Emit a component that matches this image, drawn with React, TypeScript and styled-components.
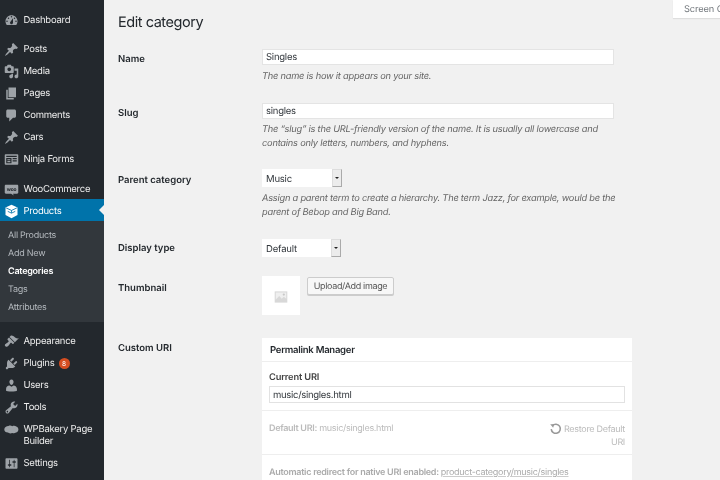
import React from "react";
import styled, { createGlobalStyle } from "styled-components";

const Global = createGlobalStyle`
  html, body { margin: 0; padding: 0; height: 480px; overflow: hidden; background: #f1f1f1; }
  body { font-family: Inter, "Open Sans", "Liberation Sans", sans-serif; font-size: 9px; color: #444; text-rendering: geometricPrecision; }
  #root { height: 480px; }
  * { box-sizing: border-box; }
`;

const Page = styled.div`
  display: flex;
  width: 720px;
  height: 480px;
  overflow: hidden;
  position: relative;
  filter: blur(0.35px);
`;

const Sidebar = styled.nav`
  width: 104px;
  flex: none;
  height: 480px;
  background: #23282d;
  padding-top: 8px;
  display: flex;
  flex-direction: column;
`;

const Group = styled.div<{ $gap?: number }>`
  margin-bottom: ${(p) => p.$gap ?? 7}px;
`;

const Item = styled.div<{ $active?: boolean; $tall?: boolean }>`
  position: relative;
  display: flex;
  align-items: ${(p) => (p.$tall ? "flex-start" : "center")};
  height: ${(p) => (p.$tall ? 34 : 22)}px;
  padding-top: ${(p) => (p.$tall ? 4 : 0)}px;
  padding-left: 4px;
  background: ${(p) => (p.$active ? "#0073aa" : "transparent")};
  color: ${(p) => (p.$active ? "#fff" : "#eee")};
  font-size: 9.5px;
  letter-spacing: -0.25px;
  line-height: 12px;
  ${(p) =>
    p.$active
      ? `&::after {
    content: "";
    position: absolute;
    right: 0;
    top: 6px;
    border: 5px solid transparent;
    border-right-color: #f1f1f1;
    border-left-width: 0;
  }`
      : ""}
`;

const IconSlot = styled.span<{ $active?: boolean }>`
  width: 15px;
  height: 15px;
  flex: none;
  margin: 2px 4.5px 0 0;
  color: ${(p) => (p.$active ? "#fff" : "#9ea3a8")};
  & svg {
    display: block;
    width: 15px;
    height: 15px;
    fill: currentColor;
  }
`;

const Label = styled.span`
  display: block;
  width: 72px;
  padding-top: 3px;
`;

const Badge = styled.span`
  display: inline-flex;
  width: 11px;
  height: 11px;
  margin-left: 4px;
  border-radius: 50%;
  background: #d54e21;
  color: #fff;
  font-size: 6.5px;
  letter-spacing: 0;
  align-items: center;
  justify-content: center;
`;

const PluginLabel = styled.span`
  display: flex;
  align-items: center;
  padding-top: 3px;
`;

const SubMenu = styled.div`
  background: #32373c;
  padding: 5px 0 6px 8px;
  margin-bottom: 7px;
`;

const SubItem = styled.div<{ $current?: boolean }>`
  height: 18px;
  line-height: 19px;
  font-size: 9px;
  letter-spacing: -0.25px;
  color: ${(p) => (p.$current ? "#fff" : "#b4b9be")};
  font-weight: ${(p) => (p.$current ? 600 : 400)};
`;

const Main = styled.main`
  flex: 1;
  min-width: 0;
  padding: 12px 0 0 14px;
`;

const Title = styled.h1`
  margin: 0 0 18px;
  height: 19px;
  font-size: 14.5px;
  letter-spacing: -0.45px;
  line-height: 21px;
  font-weight: 400;
  color: #23282d;
`;

const FormRow = styled.div<{ $height: number }>`
  display: grid;
  grid-template-columns: 144px 1fr;
  height: ${(p) => p.$height}px;
`;

const RowLabel = styled.div<{ $top: number }>`
  padding-top: ${(p) => p.$top}px;
  font-size: 9.5px;
  line-height: 12px;
  font-weight: 600;
  color: #23282d;
`;

const TextInput = styled.div`
  width: 352px;
  height: 16px;
  background: #fff;
  border: 1px solid #e4e4e4;
  padding-left: 3px;
  font-size: 9.5px;
  letter-spacing: -0.25px;
  line-height: 16px;
  color: #32373c;
`;

const Hint = styled.p<{ $top: number }>`
  margin: ${(p) => p.$top}px 0 0;
  font-size: 9.25px;
  letter-spacing: -0.22px;
  line-height: 14px;
  font-style: italic;
  color: #666;
  width: 367px;
`;

const Select = styled.div<{ $width: number }>`
  width: ${(p) => p.$width}px;
  height: 18px;
  background: #fff;
  display: flex;
  align-items: center;
  justify-content: space-between;
  padding-left: 4px;
  font-size: 9.5px;
  letter-spacing: -0.2px;
  color: #32373c;
`;

const SelectValue = styled.span`
  padding-top: 2px;
`;

const SelectArrow = styled.span`
  width: 10px;
  height: 18px;
  background: #ececec;
  border: 1px solid #aaa;
  border-top-color: #ddd;
  border-left-color: #ddd;
  display: flex;
  align-items: center;
  justify-content: center;
  &::before {
    content: "";
    border: 2px solid transparent;
    border-top: 2.5px solid #222;
    border-bottom: 0;
  }
`;

const ThumbRow = styled.div`
  display: flex;
  align-items: flex-start;
  gap: 7px;
`;

const Thumb = styled.div`
  width: 38px;
  height: 39px;
  padding-top: 3px;
  background: #fff;
  display: flex;
  align-items: center;
  justify-content: center;
  & svg {
    width: 14px;
    height: 14px;
  }
`;

const UploadButton = styled.div`
  width: 87px;
  height: 18px;
  margin-top: 1px;
  background: #f7f7f7;
  border: 1px solid #ccc;
  border-radius: 2px;
  box-shadow: 0 1px 0 #ccc;
  font-size: 9px;
  letter-spacing: -0.35px;
  line-height: 18px;
  text-align: center;
  color: #555;
`;

const Card = styled.section`
  width: 370px;
  height: 200px;
  background: #fff;
`;

const CardHeader = styled.div`
  height: 24px;
  padding-left: 8px;
  border-bottom: 1px solid #eee;
  font-size: 9.5px;
  letter-spacing: -0.25px;
  line-height: 25px;
  font-weight: 600;
  color: #23282d;
`;

const CardSection = styled.div<{ $height: number }>`
  height: ${(p) => p.$height}px;
  padding: 9px 7px 0;
  border-bottom: 1px solid #eee;
`;

const FieldLabel = styled.div`
  font-size: 9.25px;
  letter-spacing: -0.15px;
  line-height: 14px;
  font-weight: 600;
  color: #444;
  margin-bottom: 1px;
`;

const UriInput = styled.div`
  width: 356px;
  height: 17px;
  border: 1px solid #e2e2e2;
  padding-left: 3px;
  font-size: 9.5px;
  letter-spacing: -0.3px;
  line-height: 17px;
  color: #32373c;
`;

const DefaultRow = styled.div`
  display: flex;
  justify-content: space-between;
  font-size: 9px;
  letter-spacing: -0.3px;
  line-height: 13px;
  color: #bbb;
  padding-top: 2px;
`;

const Muted = styled.b`
  font-weight: 600;
`;

const Restore = styled.div`
  width: 84px;
  text-align: right;
  letter-spacing: -0.3px;
  & svg {
    width: 13px;
    height: 13px;
    vertical-align: -3px;
    margin-right: 2px;
  }
`;

const Redirect = styled.div`
  padding: 11px 7px 0;
  font-size: 9px;
  letter-spacing: -0.28px;
  line-height: 13px;
  color: #aaa;
  font-weight: 600;
`;

const RedirectLink = styled.span`
  font-weight: 400;
  text-decoration: underline;
  text-decoration-color: #ccc;
`;

const ScreenTab = styled.div`
  position: absolute;
  top: 0;
  left: 673px;
  width: 70px;
  height: 18px;
  background: #fff;
  box-shadow: 0 1px 1px rgba(0, 0, 0, 0.08);
  padding-left: 11px;
  font-size: 9.25px;
  letter-spacing: -0.1px;
  line-height: 19px;
  white-space: nowrap;
  color: #72777c;
`;

type IconProps = { d: string };
const Dash = ({ d }: IconProps) => (
  <svg viewBox="0 0 20 20">
    <path fillRule="evenodd" d={d} />
  </svg>
);

const P = {
  dashboard:
    "M3.76 16h12.48c1.1-1.37 1.76-3.11 1.76-5 0-4.42-3.58-8-8-8s-8 3.58-8 8c0 1.89.66 3.63 1.76 5zM10 4c.55 0 1 .45 1 1s-.45 1-1 1-1-.45-1-1 .45-1 1-1zM6 6c.55 0 1 .45 1 1s-.45 1-1 1-1-.45-1-1 .45-1 1-1zm8 0c.55 0 1 .45 1 1s-.45 1-1 1-1-.45-1-1 .45-1 1-1zm-5.37 5.55L12 7v6c0 1.1-.9 2-2 2s-2-.9-2-2c0-.57.24-1.08.63-1.45zM4 10c.55 0 1 .45 1 1s-.45 1-1 1-1-.45-1-1 .45-1 1-1zm12 0c.55 0 1 .45 1 1s-.45 1-1 1-1-.45-1-1 .45-1 1-1z",
  pin: "M10.44 3.02l1.82-1.82 6.36 6.35-1.83 1.82c-1.05-.68-2.48-.57-3.41.36l-.75.75c-.92.93-1.04 2.35-.35 3.41l-1.83 1.82-2.41-2.41-2.8 2.79c-.42.42-3.38 2.71-3.8 2.29s1.86-3.39 2.28-3.81l2.79-2.79L4.1 9.36l1.83-1.82c1.05.69 2.48.57 3.4-.36l.75-.75c.93-.92 1.05-2.35.36-3.41z",
  media:
    "M13 11V4c0-.55-.45-1-1-1h-1.67L9 1H5L3.67 3H2c-.55 0-1 .45-1 1v7c0 .55.45 1 1 1h10c.55 0 1-.45 1-1zM7 4.5c1.38 0 2.5 1.12 2.5 2.5S8.38 9.5 7 9.5 4.5 8.38 4.5 7 5.62 4.5 7 4.5zM14 6h5v10.5c0 1.38-1.12 2.5-2.5 2.5S14 17.88 14 16.5s1.12-2.5 2.5-2.5c.17 0 .34.02.5.05V9h-3V6zm-4 8.05V13h2v3.5c0 1.38-1.12 2.5-2.5 2.5S7 17.88 7 16.5 8.12 14 9.5 14c.17 0 .34.02.5.05z",
  page: "M6 15V2h10v13H6zm-1 1h8v2H3V5h2v11z",
  comments: "M5 2h9c1.1 0 2 .9 2 2v7c0 1.1-.9 2-2 2h-2l-5 5v-5H5c-1.1 0-2-.9-2-2V4c0-1.1.9-2 2-2z",
  ninja:
    "M2 3h16c.55 0 1 .45 1 1v12c0 .55-.45 1-1 1H2c-.55 0-1-.45-1-1V4c0-.55.45-1 1-1zM3 5v1.5h14V5H3zm0 3v7h7V8H3zm8.5 0v1.5H17V8h-5.5zm0 3v1.5H17V11h-5.5zM4.5 9.5h4V11h-4V9.5zm0 2.5h4v1.5h-4V12z",
  appearance:
    "M14.48 11.06L7.41 3.99l1.5-1.5c.5-.56 2.3-.47 3.51.32 1.21.8 1.43 1.28 2.91 2.1 1.18.64 2.45 1.26 4.45.85zm-.71.71L6.7 4.7 4.93 6.47c-.39.39-.39 1.02 0 1.41l1.06 1.06c.39.39.39 1.03 0 1.42-.6.6-1.43 1.11-2.21 1.69-.35.26-.7.53-1.01.84C1.43 13.23.4 14.98 1.72 16.3s3.07.29 4.42-1.05c.31-.31.58-.66.84-1.01.58-.78 1.09-1.61 1.69-2.21.39-.39 1.03-.39 1.42 0l1.06 1.06c.39.39 1.02.39 1.41 0z",
  plugins:
    "M13.11 4.36L9.87 7.6 8 5.73l3.24-3.24c.35-.34 1.05-.2 1.56.32.52.51.66 1.21.31 1.55zm-8 1.77l.91-1.12 9.01 9.01-1.19.84c-.71.71-2.63 1.16-3.82 1.16H6.14L4.9 17.26c-.59.59-1.54.59-2.12 0-.59-.58-.59-1.53 0-2.12l1.24-1.24v-3.88c0-1.13.4-3.19 1.09-3.89zm7.26 3.97l3.24-3.24c.34-.35 1.04-.21 1.55.31.52.51.66 1.21.31 1.55l-3.24 3.25z",
  users:
    "M10 9.25c-2.27 0-2.73-3.44-2.73-3.44C7 4.02 7.82 2 9.97 2c2.16 0 2.98 2.02 2.71 3.81 0 0-.41 3.44-2.68 3.44zm0 2.57L12.72 10c2.39 0 4.52 2.33 4.52 4.53v2.49s-3.65 1.13-7.24 1.13c-3.65 0-7.24-1.13-7.24-1.13v-2.49c0-2.25 1.94-4.48 4.47-4.48z",
  tools:
    "M16.68 9.77c-1.34 1.34-3.3 1.67-4.95.99l-5.41 6.52c-.99.99-2.59.99-3.58 0s-.99-2.59 0-3.57l6.52-5.42c-.68-1.65-.35-3.61.99-4.95 1.28-1.28 3.12-1.62 4.72-1.06l-2.89 2.89 2.82 2.82 2.86-2.87c.53 1.58.18 3.39-1.08 4.65zM3.81 16.21c.4.39 1.04.39 1.43 0 .4-.4.4-1.04 0-1.43-.39-.4-1.03-.4-1.43 0-.39.39-.39 1.03 0 1.43z",
  settings:
    "M18 16V4c0-.55-.45-1-1-1H3c-.55 0-1 .45-1 1v12c0 .55.45 1 1 1h14c.55 0 1-.45 1-1zM8 11h1c.55 0 1 .45 1 1s-.45 1-1 1H8v1.5c0 .28-.22.5-.5.5s-.5-.22-.5-.5V13H6c-.55 0-1-.45-1-1s.45-1 1-1h1V5.5c0-.28.22-.5.5-.5s.5.22.5.5V11zm5-2h-1c-.55 0-1-.45-1-1s.45-1 1-1h1V5.5c0-.28.22-.5.5-.5s.5.22.5.5V7h1c.55 0 1 .45 1 1s-.45 1-1 1h-1v5.5c0 .28-.22.5-.5.5s-.5-.22-.5-.5V9z",
  cloud:
    "M6 4c1.6-1 3.6-.8 5 .2 1.6-1 4.2-.8 5.4.6 1.6.6 2.8 2 2.8 4 0 2.2-1.4 3.6-3.2 4-1.6 1.2-3.6 1.2-5 .4-1.8 1-4.4.8-5.8-.4C2.4 12.6.4 11 .4 8.6.4 6 3 4.2 6 4z",
};

const WooIcon = () => (
  <svg viewBox="0 0 20 20">
    <path d="M2.5 3.5h15c.9 0 1.5.6 1.5 1.5v9c0 .9-.6 1.5-1.5 1.5H12l1 2.5-3.5-2.5h-7C1.6 15.5 1 14.9 1 14V5c0-.9.6-1.5 1.5-1.5z" />
    <text x="10" y="11.8" textAnchor="middle" fontSize="6.5" fontWeight="700" fill="#23282d">
      woo
    </text>
  </svg>
);

const CubeIcon = () => (
  <svg viewBox="0 0 20 20">
    <path d="M10 1l8 3.6v10.2L10 19l-8-4.2V4.6L10 1z" />
    <path d="M2.8 5.2L10 8.6l7.2-3.4M10 8.6v3.2M5 9.8l5 2.4 5-2.4" fill="none" stroke="#0073aa" strokeWidth="1.1" />
  </svg>
);

const ImageGlyph = () => (
  <svg viewBox="0 0 20 20">
    <rect x="1" y="2" width="18" height="16" fill="#d8d8d8" />
    <path d="M2.5 3.5h15v9l-3.5-3-3 3-3.5-4-5 5v-10z" fill="#efefef" />
    <circle cx="14" cy="6.5" r="1.6" fill="#c8c8c8" />
  </svg>
);

const RestoreGlyph = () => (
  <svg viewBox="0 0 20 20" fill="none" stroke="#999" strokeWidth="2.4">
    <path d="M5.2 5.6A7 7 0 1 1 3.4 11" />
    <path d="M1.8 3.4l6.2 .2-1.6 5.4z" fill="#999" stroke="none" />
  </svg>
);

type Entry = { icon: React.ReactNode; label: string; tall?: boolean; badge?: string };

const MenuItem = ({ icon, label, tall, badge }: Entry) => (
  <Item $tall={tall}>
    <IconSlot>{icon}</IconSlot>
    {badge ? (
      <PluginLabel>
        {label}
        <Badge>{badge}</Badge>
      </PluginLabel>
    ) : (
      <Label>{label}</Label>
    )}
  </Item>
);

const groupA: Entry[] = [
  { icon: <Dash d={P.pin} />, label: "Posts" },
  { icon: <Dash d={P.media} />, label: "Media" },
  { icon: <Dash d={P.page} />, label: "Pages" },
  { icon: <Dash d={P.comments} />, label: "Comments" },
  { icon: <Dash d={P.pin} />, label: "Cars" },
  { icon: <Dash d={P.ninja} />, label: "Ninja Forms" },
];

const groupB: Entry[] = [
  { icon: <Dash d={P.appearance} />, label: "Appearance" },
  { icon: <Dash d={P.plugins} />, label: "Plugins", badge: "8" },
  { icon: <Dash d={P.users} />, label: "Users" },
  { icon: <Dash d={P.tools} />, label: "Tools" },
  { icon: <Dash d={P.cloud} />, label: "WPBakery Page Builder", tall: true },
  { icon: <Dash d={P.settings} />, label: "Settings" },
];

const subItems = ["All Products", "Add New", "Categories", "Tags", "Attributes"];

export default function App() {
  return (
    <Page>
      <Global />
      <Sidebar>
        <Group>
          <MenuItem icon={<Dash d={P.dashboard} />} label="Dashboard" />
        </Group>
        <Group $gap={8}>
          {groupA.map((e) => (
            <MenuItem key={e.label} {...e} />
          ))}
        </Group>
        <MenuItem icon={<WooIcon />} label="WooCommerce" />
        <Item $active>
          <IconSlot $active>
            <CubeIcon />
          </IconSlot>
          <Label>Products</Label>
        </Item>
        <SubMenu>
          {subItems.map((s) => (
            <SubItem key={s} $current={s === "Categories"}>
              {s}
            </SubItem>
          ))}
        </SubMenu>
        {groupB.map((e) => (
          <MenuItem key={e.label} {...e} />
        ))}
      </Sidebar>
      <Main>
        <Title>Edit category</Title>
        <FormRow $height={54}>
          <RowLabel $top={5}>Name</RowLabel>
          <div>
            <TextInput>Singles</TextInput>
            <Hint $top={5}>The name is how it appears on your site.</Hint>
          </div>
        </FormRow>
        <FormRow $height={66}>
          <RowLabel $top={5}>Slug</RowLabel>
          <div>
            <TextInput>singles</TextInput>
            <Hint $top={4}>
              The “slug” is the URL-friendly version of the name. It is usually all lowercase and contains only
              letters, numbers, and hyphens.
            </Hint>
          </div>
        </FormRow>
        <FormRow $height={70}>
          <RowLabel $top={6}>Parent category</RowLabel>
          <div>
            <Select $width={80}>
              <SelectValue>Music</SelectValue>
              <SelectArrow />
            </Select>
            <Hint $top={5}>
              Assign a parent term to create a hierarchy. The term Jazz, for example, would be the parent of Bebop and
              Big Band.
            </Hint>
          </div>
        </FormRow>
        <FormRow $height={37}>
          <RowLabel $top={4}>Display type</RowLabel>
          <Select $width={79}>
            <SelectValue>Default</SelectValue>
            <SelectArrow />
          </Select>
        </FormRow>
        <FormRow $height={62}>
          <RowLabel $top={7}>Thumbnail</RowLabel>
          <ThumbRow>
            <Thumb>
              <ImageGlyph />
            </Thumb>
            <UploadButton>Upload/Add image</UploadButton>
          </ThumbRow>
        </FormRow>
        <FormRow $height={200}>
          <RowLabel $top={5}>Custom URI</RowLabel>
          <Card>
            <CardHeader>Permalink Manager</CardHeader>
            <CardSection $height={49}>
              <FieldLabel>Current URI</FieldLabel>
              <UriInput>music/singles.html</UriInput>
            </CardSection>
            <CardSection $height={44}>
              <DefaultRow>
                <span>
                  <Muted>Default URI:</Muted> music/singles.html
                </span>
                <Restore>
                  <RestoreGlyph />
                  Restore Default URI
                </Restore>
              </DefaultRow>
            </CardSection>
            <Redirect>
              Automatic redirect for native URI enabled:{" "}
              <RedirectLink>product-category/music/singles</RedirectLink>
            </Redirect>
          </Card>
        </FormRow>
      </Main>
      <ScreenTab>Screen Options</ScreenTab>
    </Page>
  );
}
